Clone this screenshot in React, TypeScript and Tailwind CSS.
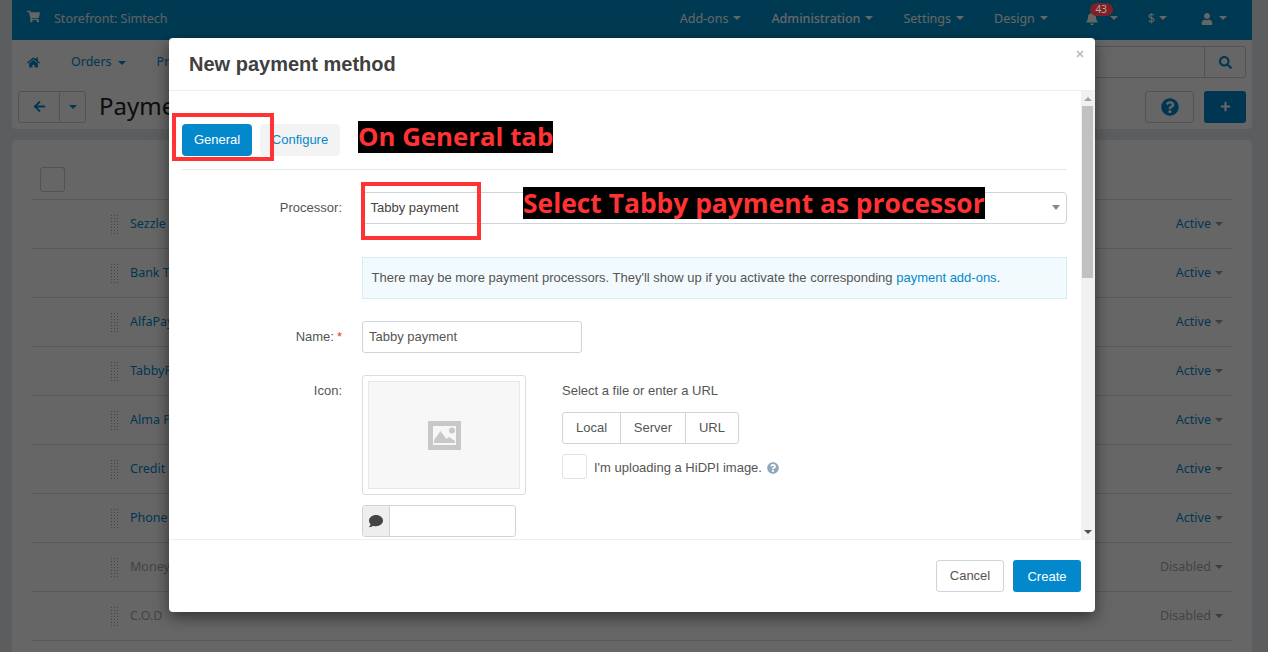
import React from 'react';
import { FaShoppingCart, FaHome, FaArrowLeft, FaBell, FaUser, FaSearch, FaQuestionCircle, FaPlus, FaComment, FaTimes } from 'react-icons/fa';

const Caret = ({ className = '' }: { className?: string }) => (
    <span className={`inline-block w-0 h-0 border-x-[4px] border-x-transparent border-t-[4px] border-t-current ${className}`} />
);

const rows = [
    { name: 'Sezzle Pay', active: true },
    { name: 'Bank Transfer', active: true },
    { name: 'AlfaPay', active: true },
    { name: 'TabbyPay', active: true },
    { name: 'Alma Pay', active: true },
    { name: 'Credit card', active: true },
    { name: 'Phone order', active: true },
    { name: 'Money order', active: false },
    { name: 'C.O.D', active: false },
];

const Grip = () => (
    <span className="w-[8px] h-[20px] bg-[radial-gradient(#a8a8a8_0.6px,transparent_0.8px)] bg-[size:3px_3px]" />
);

const Backdrop = () => (
    <div className="h-[652px] overflow-hidden bg-[#e6e8ea] pl-[12px] pr-[16px] font-['Noto_Sans',sans-serif] text-[12.5px] text-[#333]">
        {/* Top bar */}
        <div className="h-[40px] bg-[#0091cd] flex items-center text-white pl-[15px] pr-[25px] pb-[1px]">
            <FaShoppingCart className="w-[13px] h-[13px] -mt-[7px]" />
            <span className="ml-[14px] text-[#f2f2f2]">Storefront: Simtech</span>
            <div className="ml-auto flex items-center">
                <span className="flex items-center gap-[5px]">Add-ons <Caret className="-mt-[4px]" /></span>
                <span className="ml-[30px] flex items-center gap-[5px] font-medium">Administration <Caret className="-mt-[4px]" /></span>
                <span className="ml-[30px] flex items-center gap-[5px]">Settings <Caret className="-mt-[4px]" /></span>
                <span className="ml-[30px] flex items-center gap-[5px]">Design <Caret className="-mt-[4px]" /></span>
                <span className="ml-[38px] -mt-[2px] relative flex items-center gap-[12px]">
                    <FaBell className="w-[12px] h-[13px]" />
                    <Caret className="-mt-[2px]" />
                    <span className="absolute z-10 left-[4px] -top-[9px] w-[23px] h-[13px] rounded-full bg-[#7d2128] text-[#b9a5a5] text-[10px] leading-[13px] text-center">43</span>
                </span>
                <span className="ml-[30px] flex items-center gap-[4px] -mt-[1px]">$ <Caret className="-mt-[3px]" /></span>
                <span className="ml-[34px] -mt-[2px] flex items-center gap-[6px]"><FaUser className="w-[12px] h-[12px]" /> <Caret className="-mt-[2px]" /></span>
            </div>
        </div>
        {/* Sub nav */}
        <div className="h-[44px] bg-white flex items-center pl-[15px] pr-[6px] pt-[1px] text-[#0388cc]">
            <FaHome className="w-[13px] h-[13px]" />
            <span className="ml-[31px] flex items-center gap-[6px]">Orders <Caret /></span>
            <span className="ml-[31px]">Pr</span>
            <div className="ml-auto flex w-[300px] h-[32px] -mt-[1px] rounded-[3px] border border-[#ccc] bg-white">
                <span className="flex-1" />
                <span className="w-[41px] border-l border-[#ccc] flex items-center justify-center">
                    <FaSearch className="w-[13px] h-[13px]" />
                </span>
            </div>
        </div>
        {/* Title bar */}
        <div className="h-[45px] bg-white rounded-b-[4px] flex items-center pl-[6px] pr-[6px]">
            <div className="flex h-[32px] rounded-[3px] border border-[#ccc] text-[#0388cc]">
                <span className="w-[41px] border-r border-[#ccc] flex items-center justify-center"><FaArrowLeft className="w-[13px] h-[13px]" /></span>
                <span className="w-[25px] flex items-center justify-center"><Caret /></span>
            </div>
            <span className="ml-[13px] -mt-[2px] text-[24px] text-[#222]">Payment methods</span>
            <div className="ml-auto flex items-center gap-[10px]">
                <span className="w-[49px] h-[32px] rounded-[3px] border border-[#ccc] flex items-center justify-center text-[#0388cc]">
                    <FaQuestionCircle className="w-[18px] h-[18px]" />
                </span>
                <span className="w-[42px] h-[32px] rounded-[3px] bg-[#0388cc] text-white flex items-center justify-center">
                    <FaPlus className="w-[11px] h-[11px]" />
                </span>
            </div>
        </div>
        {/* Payment methods list */}
        <div className="mt-[11px] bg-white rounded-[4px] px-[20px] h-[520px]">
            <div className="h-[60px] pt-[27px] pl-[8px] border-b border-[#dddddd]">
                <span className="block w-[25px] h-[25px] rounded-[3px] border border-[#ccc]" />
            </div>
            {rows.map((row) => (
                <div key={row.name} className="h-[49px] flex items-center border-b border-[#dddddd] pl-[78px] pr-[9px]">
                    <Grip />
                    <span className={`ml-[12px] ${row.active ? 'text-[#0388cc]' : 'text-[#aaa]'}`}>{row.name}</span>
                    <span className={`ml-auto flex items-center gap-[4px] ${row.active ? 'text-[#0388cc]' : 'text-[#aaa]'}`}>
                        {row.active ? 'Active' : 'Disabled'} <Caret className="text-[#999]" />
                    </span>
                </div>
            ))}
        </div>
    </div>
);

const Field = ({ label, required, children, className = '' }: { label: string; required?: boolean; children: React.ReactNode; className?: string }) => (
    <div className={`flex ${className}`}>
        <label className="w-[160px] text-right pt-[7px] text-[13px] leading-[18px] text-[#555]">
            {label}{required && <span className="text-[#e33] ml-[3px]">*</span>}
        </label>
        <div className="ml-[20px] flex-1 min-w-0">{children}</div>
    </div>
);

const PictureIcon = () => (
    <svg viewBox="0 0 33 29" className="w-[33px] h-[29px] text-[#c8c8c8]" fill="currentColor">
        <path fillRule="evenodd" d="M0 0h33v29H0zM5 5v19h23V5z" />
        <circle cx="24" cy="9.5" r="3" />
        <path d="M6 22v-3l6.5-9 6 8 2.5-2 6 4v2z" />
    </svg>
);

const Modal = () => (
    <div className="absolute left-[169px] top-[38px] w-[926px] h-[574px] bg-white rounded-[4px] shadow-[0_5px_15px_rgba(0,0,0,0.5)] flex flex-col font-['Liberation_Sans',Arial,sans-serif] text-[#555]">
        <div className="relative h-[53px] shrink-0 border-b border-[#eeeeee] pl-[20px] flex items-center">
            <h3 className="text-[20px] font-bold text-[#404040] -mt-[1px]">New payment method</h3>
            <FaTimes className="absolute right-[10px] top-[11px] w-[10px] h-[10px] text-[#c0c0c0]" />
        </div>
        <div className="flex-1 min-h-0 flex">
            <div className="flex-1 min-w-0 overflow-hidden pl-[13px] pr-[14px]">
                <div className="mt-[33px] h-[46px] flex gap-[8px] items-start border-b border-[#e3e9ee]">
                    <span className="w-[70px] h-[32px] rounded-[4px] bg-[#0388cc] text-white text-[13px] flex items-center justify-center">General</span>
                    <span className="w-[80px] h-[32px] rounded-[4px] bg-[#f3f3f3] text-[#0388cc] text-[13px] flex items-center justify-center">Configure</span>
                </div>
                <Field label="Processor:" className="mt-[22px]">
                    <div className="relative h-[32px] rounded-[4px] border border-[#ccd5dc] flex items-center pl-[7.5px] text-[13px] text-[#444]">
                        Tabby payment
                        <Caret className="absolute right-[6px] top-[12px] text-[#888] border-x-[4.5px] border-t-[5px]" />
                    </div>
                </Field>
                <div className="ml-[180px] mt-[33px] h-[42px] border border-[#d4eef8] bg-[#f3fafd] flex items-center pl-[8.5px] text-[13px] text-[#555]">
                    <span>There may be more payment processors. They'll show up if you activate the corresponding <span className="text-[#0388cc]">payment add-ons</span>.</span>
                </div>
                <Field label="Name:" required className="mt-[22px]">
                    <div className="w-[220px] h-[32px] rounded-[3px] border border-[#ccd5dc] flex items-center pl-[6px] text-[13px] text-[#555]">Tabby payment</div>
                </Field>
                <Field label="Icon:" className="mt-[22px]">
                    <div className="flex">
                        <div className="w-[164px]">
                            <div className="h-[120px] rounded-[3px] border border-[#d9dfe3] p-[5px]">
                                <div className="h-full border border-[#e8e8e8] bg-[#f7f7f7] flex items-center justify-center">
                                    <PictureIcon />
                                </div>
                            </div>
                            <div className="mt-[10px] w-[154px] h-[32px] rounded-[3px] border border-[#ccd5dc] flex overflow-hidden">
                                <span className="w-[27px] bg-[#eeeeee] border-r border-[#ccd5dc] flex items-center justify-center text-[#444]">
                                    <FaComment className="w-[14px] h-[14px]" />
                                </span>
                            </div>
                        </div>
                        <div className="ml-[36px] pt-[7px] text-[13px]">
                            <div className="leading-[18px] text-[#555]">Select a file or enter a URL</div>
                            <div className="mt-[12px] inline-flex h-[32px] rounded-[3px] border border-[#ccd5dc]">
                                <span className="w-[58px] flex items-center justify-center border-r border-[#ccd5dc]">Local</span>
                                <span className="w-[65px] flex items-center justify-center border-r border-[#ccd5dc]">Server</span>
                                <span className="w-[52px] flex items-center justify-center">URL</span>
                            </div>
                            <div className="mt-[10px] flex items-center">
                                <span className="w-[25px] h-[25px] rounded-[3px] border border-[#dde3e7]" />
                                <span className="ml-[7px] mt-[2px]">I'm uploading a HiDPI image.</span>
                                <FaQuestionCircle className="ml-[5px] mt-[2px] w-[12px] h-[12px] text-[#8fa9bb]" />
                            </div>
                        </div>
                    </div>
                </Field>
            </div>
            {/* Scrollbar */}
            <div className="w-[14px] shrink-0 bg-[#f1f1f1] flex flex-col items-start pl-[1px]">
                <span className="mt-[6px] ml-[2px] w-0 h-0 border-x-[4px] border-x-transparent border-b-[4px] border-b-[#a3a3a3]" />
                <span className="mt-[5px] w-[11px] h-[172px] bg-[#c1c1c1]" />
                <span className="mt-auto mb-[5px] ml-[2px] w-0 h-0 border-x-[4px] border-x-transparent border-t-[4px] border-t-[#505050]" />
            </div>
        </div>
        <div className="h-[73px] shrink-0 border-t border-[#eeeeee] flex items-start justify-end gap-[9px] pt-[20px] pr-[14px] text-[13px]">
            <span className="w-[68px] h-[32px] rounded-[3px] border border-[#ccd5dc] flex items-center justify-center">Cancel</span>
            <span className="w-[68px] h-[32px] pt-[1px] rounded-[3px] bg-[#0388cc] text-white flex items-center justify-center">Create</span>
        </div>
    </div>
);

const App: React.FC = () => {
    return (
        <div className="relative w-[1268px] h-[652px] overflow-hidden">
            <Backdrop />
            <div className="absolute inset-0 bg-black/60" />
            <Modal />

            {/* Screenshot annotations */}
            <div className="absolute left-[172px] top-[113px] w-[102px] h-[48px] border-[4px] border-[#ff3333]" />
            <div className="absolute left-[361px] top-[182px] w-[120px] h-[58px] border-[4px] border-[#ff3333]" />
            <div className="absolute left-[358px] top-[121px] w-[195px] h-[32px] bg-black text-[#ff3333] font-['Open_Sans',sans-serif] font-bold text-[25.8px] leading-[31px] whitespace-nowrap">On General tab</div>
            <div className="absolute left-[523px] top-[187px] w-[462px] h-[32px] bg-black text-[#ff3333] font-['Open_Sans',sans-serif] font-bold text-[26.4px] leading-[32px] whitespace-nowrap">Select Tabby payment as processor</div>
        </div>
    );
};

export default App;
